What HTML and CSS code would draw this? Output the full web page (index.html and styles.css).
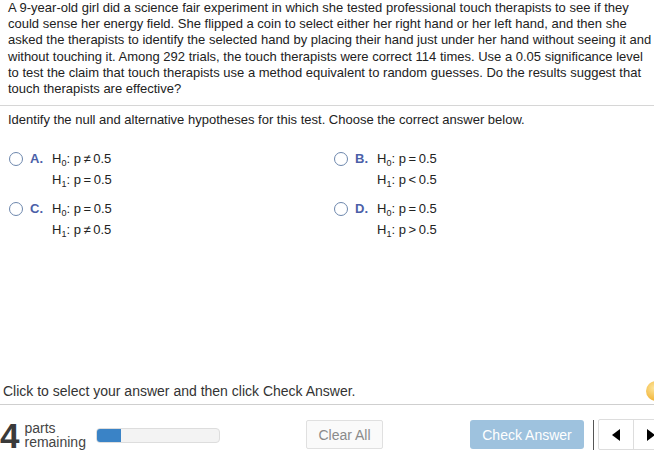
FILE: index.html
```html
<!DOCTYPE html>
<html>
<head>
<meta charset="utf-8">
<link rel="stylesheet" href="styles.css">
</head>
<body>
<div class="page">
  <div class="question">
    <p class="stem">A 9-year-old girl did a science fair experiment in which she tested professional touch therapists to see if they could sense her energy field. She flipped a coin to select either her right hand or her left hand, and then she asked the therapists to identify the selected hand by placing their hand just under her hand without seeing it and without touching it. Among 292 trials, the touch therapists were correct 114 times. Use a 0.05 significance level to test the claim that touch therapists use a method equivalent to random guesses. Do the results suggest that touch therapists are effective?</p>
    <div class="rule"></div>
    <p class="prompt">Identify the null and alternative hypotheses for this test. Choose the correct answer below.</p>
    <div class="options">
      <div class="opt">
        <span class="radio"></span><span class="letter">A.</span>
        <div class="hyp"><div>H<sub>0</sub>: p&thinsp;≠&thinsp;0.5</div><div>H<sub>1</sub>: p&thinsp;=&thinsp;0.5</div></div>
      </div>
      <div class="opt">
        <span class="radio"></span><span class="letter">B.</span>
        <div class="hyp"><div>H<sub>0</sub>: p&thinsp;=&thinsp;0.5</div><div>H<sub>1</sub>: p&thinsp;&lt;&thinsp;0.5</div></div>
      </div>
      <div class="opt">
        <span class="radio"></span><span class="letter">C.</span>
        <div class="hyp"><div>H<sub>0</sub>: p&thinsp;=&thinsp;0.5</div><div>H<sub>1</sub>: p&thinsp;≠&thinsp;0.5</div></div>
      </div>
      <div class="opt">
        <span class="radio"></span><span class="letter">D.</span>
        <div class="hyp"><div>H<sub>0</sub>: p&thinsp;=&thinsp;0.5</div><div>H<sub>1</sub>: p&thinsp;&gt;&thinsp;0.5</div></div>
      </div>
    </div>
  </div>
  <div class="status">
    <span class="status-text">Click to select your answer and then click Check Answer.</span>
    <span class="help-dot"></span>
  </div>
  <div class="footer">
    <div class="parts">
      <span class="num">4</span>
      <span class="parts-label">parts<br>remaining</span>
    </div>
    <div class="progress"><div class="progress-fill" style="width:20%"></div></div>
    <button class="btn-clear">Clear All</button>
    <button class="btn-check">Check Answer</button>
    <span class="sep"></span>
    <div class="nav">
      <span class="nav-btn"><svg width="10" height="12" viewBox="0 0 10 12"><path d="M9 0 L9 12 L1 6 Z" fill="#000"/></svg></span>
      <span class="nav-btn"><svg width="10" height="12" viewBox="0 0 10 12"><path d="M1 0 L1 12 L9 6 Z" fill="#000"/></svg></span>
    </div>
  </div>
</div>
</body>
</html>
```
FILE: styles.css
```css
html, body {
  margin: 0;
  padding: 0;
  background: #fff;
  width: 654px;
  height: 454px;
  overflow: hidden;
}
body {
  font-family: "Liberation Sans", Arial, sans-serif;
  font-size: 13px;
  color: #222;
}
.page {
  display: flex;
  flex-direction: column;
  height: 454px;
}
.question {
  height: 375px;
  flex: none;
}
.stem {
  margin: 0;
  padding: 0 0 0 8px;
  width: 648px;
  line-height: 16.2px;
}
.rule {
  height: 1px;
  background: #d6d6d6;
  margin-top: 8px;
}
.prompt {
  margin: 6px 0 0 8px;
  line-height: 16px;
}
.options {
  display: grid;
  grid-template-columns: 325px 325px;
  row-gap: 8px;
  margin-top: 20px;
  margin-left: 9px;
}
.opt {
  display: flex;
  align-items: flex-start;
}
.radio {
  width: 12px;
  height: 12px;
  border: 1px solid #6d87ad;
  border-radius: 50%;
  margin-top: 4px;
  flex: none;
}
.letter {
  color: #4b5fa8;
  font-weight: bold;
  margin-left: 7px;
  width: 22px;
  line-height: 21px;
}
.hyp {
  line-height: 21px;
  color: #222;
}
.hyp sub {
  font-size: 9px;
  vertical-align: -3px;
  line-height: 0;
}
.status {
  display: flex;
  align-items: center;
  justify-content: space-between;
  height: 29px;
  flex: none;
  border-bottom: 1px solid #cfcfcf;
  padding-left: 3px;
}
.status-text {
  font-size: 14px;
  color: #333;
  margin-top: 2px;
}
.help-dot {
  width: 20px;
  height: 20px;
  border-radius: 50%;
  background: radial-gradient(circle at 40% 35%, #fde59b, #f2b63c 70%, #d99a20);
  margin-right: -12px;
  margin-top: 2px;
}
.footer {
  display: flex;
  align-items: center;
  height: 39px;
  padding-top: 10px;
  flex: none;
}
.footer > * {
  flex: none;
}
.parts {
  display: flex;
  align-items: center;
  width: 96px;
}
.num {
  font-size: 35px;
  font-weight: bold;
  color: #3a3a3a;
  margin-left: 0;
  line-height: 30px;
  height: 30px;
  margin-top: 2px;
}
.parts-label {
  font-size: 14px;
  line-height: 14.5px;
  color: #444;
  margin-left: 5px;
  margin-top: 1px;
}
.progress {
  width: 122px;
  height: 13px;
  border: 1px solid #ddd;
  border-radius: 4px;
  background: #f3f3f3;
  overflow: hidden;
  margin-top: 1px;
}
.progress-fill {
  height: 100%;
  background: #3a83c6;
}
button {
  font-family: "Liberation Sans", Arial, sans-serif;
  font-size: 14px;
}
.btn-clear {
  margin-left: 86px;
  width: 77px;
  height: 29px;
  border: 1px solid #e0e0e0;
  border-radius: 2px;
  background: #fafafa;
  color: #8a8a8a;
  padding: 0;
}
.btn-check {
  margin-left: 87px;
  width: 114px;
  height: 29px;
  border: none;
  border-radius: 3px;
  background: #9ec2de;
  color: #fff;
  padding: 0;
}
.sep {
  width: 1px;
  height: 30px;
  background: #555;
  margin-left: 9px;
}
.nav {
  display: flex;
  margin-left: 4px;
  border: 1px solid #ddd;
  border-radius: 2px;
  height: 29px;
}
.nav-btn {
  width: 34px;
  display: flex;
  align-items: center;
  justify-content: center;
  border-right: 1px solid #ddd;
}
```
